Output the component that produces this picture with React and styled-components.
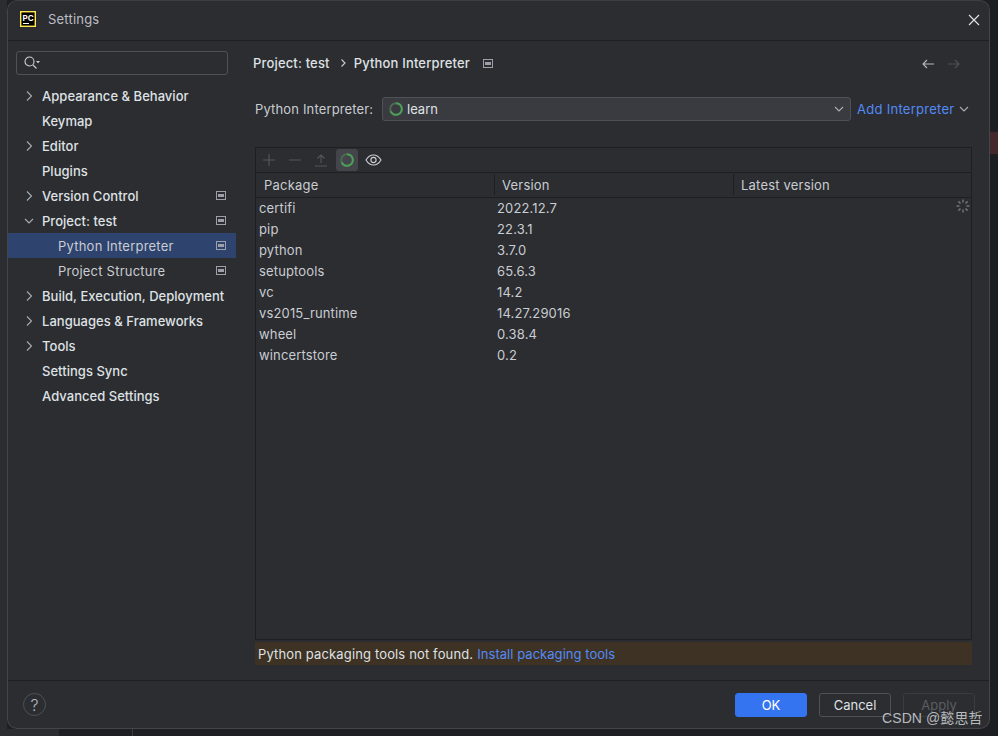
import React from 'react';
import styled, { createGlobalStyle } from 'styled-components';

const GlobalStyle = createGlobalStyle`
  html, body {
    margin: 0;
    padding: 0;
    background: #1e1f22;
    overflow: hidden;
  }
  * {
    box-sizing: border-box;
  }
`;

const Desktop = styled.div`
  position: relative;
  width: 998px;
  height: 736px;
  display: flex;
  flex-direction: column;
  font-family: Inter, 'Liberation Sans', sans-serif;
  font-size: 13px;
  color: #dfe1e5;
`;

const Middle = styled.div`
  display: flex;
  height: 729px;
`;

const LeftEdge = styled.div`
  width: 7px;
  background: #2b2d30;
`;

const RightEdge = styled.div`
  flex: 1;
  padding-top: 132px;
  background: #1e1f22;
`;

const RedMark = styled.div`
  height: 22px;
  background: #45282b;
`;

const BottomEdge = styled.div`
  height: 7px;
  display: flex;
  background: #1e1f22;
`;

const BottomLeft = styled.div`
  width: 59px;
  background: #2b2d30;
`;

const BottomGutter = styled.div`
  width: 74px;
  border-right: 1px solid #393b40;
`;

const Dialog = styled.div`
  width: 983px;
  display: flex;
  flex-direction: column;
  background: #2b2d30;
  border: 1px solid #43454a;
  border-top-color: #3c3e43;
  border-radius: 10px;
  overflow: hidden;
`;

const TitleBar = styled.div`
  height: 40px;
  flex: none;
  display: flex;
  align-items: center;
  padding: 0 10px 3px 12px;
  border-bottom: 1px solid #1e1f22;
`;

const TitleText = styled.span`
  margin-left: 12px;
  color: #bcbec4;
  letter-spacing: 0.2px;
  flex: 1;
`;

const CloseSlot = styled.span`
  display: flex;
  margin-top: 2px;
  margin-right: -1px;
`;

const Content = styled.div`
  flex: 1;
  min-height: 0;
  display: flex;
`;

const Sidebar = styled.div`
  width: 228px;
  flex: none;
  padding-top: 10px;
`;

const SearchBox = styled.div`
  height: 24px;
  margin: 0 8px 8px 8px;
  padding-left: 6px;
  display: flex;
  align-items: center;
  border: 1px solid #4e5157;
  border-radius: 3px;
`;

const TreeRow = styled.div`
  height: 25px;
  display: flex;
  align-items: center;
  padding-left: ${p => (p.$child ? 50 : 34)}px;
  padding-right: 10px;
  background: ${p => (p.$selected ? '#2e436e' : 'transparent')};
  color: ${p => (p.$child ? '#c9ccd2' : '#dfe1e5')};
  font-weight: ${p => (p.$child ? 400 : 500)};
  letter-spacing: ${p => (p.$child ? '0.22px' : '0.03px')};
  position: relative;
`;

const Arrow = styled.span`
  position: absolute;
  left: 15px;
  top: 7px;
  width: 12px;
  height: 12px;
  display: flex;
`;

const RowLabel = styled.span`
  flex: 1;
`;

const Main = styled.div`
  flex: 1;
  min-width: 0;
  display: flex;
  flex-direction: column;
  padding: 0 17px 0 19px;
`;

const Breadcrumbs = styled.div`
  height: 44px;
  flex: none;
  margin-left: -2px;
  display: flex;
  align-items: center;
  font-weight: 500;
  letter-spacing: 0.16px;
`;

const CrumbSep = styled.span`
  margin: 0 5px 0 7px;
  display: flex;
`;

const CrumbIcon = styled.span`
  margin-left: 13px;
  display: flex;
`;

const NavArrows = styled.div`
  margin-left: auto;
  margin-right: 12px;
  margin-top: 2px;
  display: flex;
  gap: 14px;
`;

const InterpreterRow = styled.div`
  margin-top: 11px;
  height: 26px;
  flex: none;
  display: flex;
  align-items: center;
`;

const InterpreterLabel = styled.span`
  width: 127px;
  flex: none;
  color: #c9ccd2;
  letter-spacing: 0.15px;
`;

const Combo = styled.div`
  width: 469px;
  height: 24px;
  flex: none;
  display: flex;
  align-items: center;
  padding: 0 5px 0 6px;
  gap: 4px;
  background: #393b40;
  border: 1px solid #4e5157;
  border-radius: 3px;
  color: #dfe1e5;
`;

const AddLink = styled.span`
  margin-left: 6px;
  color: #548af7;
  display: flex;
  align-items: center;
  gap: 3px;
  letter-spacing: 0.28px;
  white-space: nowrap;
`;

const PackagesPanel = styled.div`
  margin-top: 25px;
  height: 493px;
  flex: none;
  display: flex;
  flex-direction: column;
  border: 1px solid #1e1f22;
`;

const Toolbar = styled.div`
  height: 25px;
  flex: none;
  display: flex;
  align-items: center;
  padding-left: 2px;
  border-bottom: 1px solid #1e1f22;
`;

const ToolButton = styled.div`
  width: 22px;
  height: 22px;
  margin-right: 4px;
  display: flex;
  align-items: center;
  justify-content: center;
  border-radius: 3px;
  background: ${p => (p.$active ? '#43454a' : 'transparent')};
`;

const TableHead = styled.div`
  height: 25px;
  flex: none;
  display: grid;
  grid-template-columns: 238px 239px 1fr;
  border-bottom: 1px solid #1e1f22;
`;

const HeadCell = styled.div`
  display: flex;
  align-items: center;
  padding-left: ${p => (p.$first ? 8 : 7)}px;
  height: 21px;
  margin-top: 1px;
  color: #c9ccd2;
  letter-spacing: 0.2px;
  border-left: ${p => (p.$first ? 'none' : '1px solid #1e1f22')};
`;

const TableBody = styled.div`
  position: relative;
  flex: 1;
`;

const Row = styled.div`
  height: 21px;
  display: grid;
  grid-template-columns: 238px 1fr;
  align-items: start;
  line-height: 20px;
  padding-left: 3px;
  color: #c9ccd2;
  letter-spacing: 0.15px;
`;

const Spinner = styled.span`
  position: absolute;
  top: 1px;
  right: 1px;
  display: flex;
`;

const WarningBar = styled.div`
  margin-top: 2px;
  height: 23px;
  flex: none;
  display: flex;
  align-items: center;
  padding-left: 3px;
  gap: 4px;
  background: #3d3223;
  color: #dfe1e5;
  letter-spacing: 0.14px;
`;

const WarningLink = styled.span`
  color: #548af7;
  letter-spacing: 0.04px;
`;

const Footer = styled.div`
  height: 48px;
  flex: none;
  display: flex;
  align-items: center;
  padding: 0 14px 0 15px;
  border-top: 1px solid #1e1f22;
`;

const HelpButton = styled.div`
  width: 23px;
  height: 23px;
  display: flex;
  align-items: center;
  justify-content: center;
  border: 1px solid #4e5157;
  border-radius: 50%;
  color: #b4b8bf;
  font-size: 16px;
  font-weight: 300;
  margin-right: auto;
`;

const DialogButton = styled.div`
  width: 72px;
  height: 24px;
  margin-left: 12px;
  display: flex;
  align-items: center;
  justify-content: center;
  border-radius: 3px;
  background: ${p => (p.$primary ? '#3574f0' : 'transparent')};
  border: 1px solid ${p => (p.$primary ? '#3574f0' : p.$disabled ? '#393b40' : '#4e5157')};
  color: ${p => (p.$disabled ? '#5a5d63' : p.$primary ? '#ffffff' : '#dfe1e5')};
`;

const Watermark = styled.span`
  position: absolute;
  left: 882px;
  top: 710px;
  color: #b9bbbf;
  font-family: 'Liberation Sans', 'Noto Sans CJK SC', sans-serif;
  font-size: 14px;
  line-height: 16px;
  letter-spacing: 0.1px;
`;

const Logo = () => (
  <svg width="16" height="16" viewBox="0 0 16 16">
    <rect x="0.7" y="0.7" width="14.600" height="14.600" fill="#000" stroke="#ffe94d" strokeWidth="1.400" />
    <text x="2.600" y="9.500" fill="#fff" fontSize="8" fontWeight="700" fontFamily="Inter, sans-serif">PC</text>
    <rect x="3" y="12" width="6" height="1" fill="#fff" />
  </svg>
);

const Close = () => (
  <svg width="12" height="12" viewBox="0 0 12 12" fill="none" stroke="#e3e5e8" strokeWidth="1.1">
    <path d="M1 1l10 10M11 1L1 11" />
  </svg>
);

const SearchIcon = () => (
  <svg width="18" height="16" viewBox="0 0 18 16" fill="none" stroke="#ced0d6" strokeWidth="1.1">
    <circle cx="6.5" cy="6.5" r="4.5" />
    <path d="M10 10l3.5 3.5" />
    <path d="M13 6h4l-2 2.2z" fill="#ced0d6" stroke="none" />
  </svg>
);

const Chevron = ({ open, color = '#a8adb5' }) => (
  <svg width="12" height="12" viewBox="0 0 12 12" fill="none" stroke={color} strokeWidth="1.1">
    <path d={open ? 'M2 4l4 4 4-4' : 'M4 1.500l4.500 4.500-4.500 4.500'} />
  </svg>
);

const SmallCrumbChevron = () => (
  <svg width="12" height="12" viewBox="0 0 12 12" fill="none" stroke="#c9ccd2" strokeWidth="1.1">
    <path d="M4.500 2.500l3.500 3.500-3.500 3.500" />
  </svg>
);

const ProjectMark = ({ color = '#9da0a8' }) => (
  <svg width="10" height="9" viewBox="0 0 10 9" fill="none">
    <rect x="0.5" y="0.5" width="9" height="8" stroke={color} />
    <rect x="2" y="3" width="6" height="3" fill={color} />
  </svg>
);

// busy ring: bright on the right and bottom, fading out to the top left
const Ring = () => (
  <svg width="14" height="14" viewBox="0 0 14 14" fill="none" strokeWidth="2">
    <circle cx="7" cy="7" r="5.800" stroke="#4d6b52" />
    <path d="M7 1.200A5.800 5.800 0 1 1 1.700 9.300" stroke="#4c9f58" />
  </svg>
);

const Plus = () => (
  <svg width="14" height="14" viewBox="0 0 14 14" fill="none" stroke="#55575c" strokeWidth="1.1">
    <path d="M7 1v12M1 7h12" />
  </svg>
);

const Minus = () => (
  <svg width="14" height="14" viewBox="0 0 14 14" fill="none" stroke="#55575c" strokeWidth="1.1">
    <path d="M1 7h12" />
  </svg>
);

const Upgrade = () => (
  <svg width="14" height="14" viewBox="0 0 14 14" fill="none" stroke="#55575c" strokeWidth="1.1">
    <path d="M7 10V2M3.5 5.5L7 2l3.5 3.5M1 13h12" />
  </svg>
);

const Eye = () => (
  <svg width="17" height="12" viewBox="0 0 17 12" fill="none" stroke="#ced0d6" strokeWidth="1.1">
    <path d="M1 6c2-3.400 4.500-5 7.500-5s5.500 1.600 7.500 5c-2 3.400-4.500 5-7.500 5S3 9.400 1 6z" />
    <circle cx="8.500" cy="6" r="2.600" />
  </svg>
);

const NavArrow = ({ back, color }) => (
  <svg width="12" height="10" viewBox="0 0 12 10" fill="none" stroke={color} strokeWidth="1.1">
    <path d={back ? 'M12 5H1M5 1L1 5l4 4' : 'M0 5h11M7 1l4 4-4 4'} />
  </svg>
);

const LoadingSpinner = () => (
  <svg width="14" height="14" viewBox="0 0 14 14" fill="none" stroke="#6f7278" strokeWidth="1.500">
    <path d="M7 0.500v3M7 10.500v3M0.500 7h3M10.500 7h3M2.400 2.400l2.100 2.100M9.500 9.500l2.100 2.100M11.600 2.400L9.500 4.500M4.500 9.500l-2.100 2.100" />
  </svg>
);

const treeItems = [
  { label: 'Appearance & Behavior', arrow: 'closed' },
  { label: 'Keymap' },
  { label: 'Editor', arrow: 'closed' },
  { label: 'Plugins' },
  { label: 'Version Control', arrow: 'closed', mark: true },
  { label: 'Project: test', arrow: 'open', mark: true },
  { label: 'Python Interpreter', child: true, selected: true, mark: true },
  { label: 'Project Structure', child: true, mark: true },
  { label: 'Build, Execution, Deployment', arrow: 'closed' },
  { label: 'Languages & Frameworks', arrow: 'closed' },
  { label: 'Tools', arrow: 'closed' },
  { label: 'Settings Sync' },
  { label: 'Advanced Settings' },
];

const packages = [
  ['certifi', '2022.12.7'],
  ['pip', '22.3.1'],
  ['python', '3.7.0'],
  ['setuptools', '65.6.3'],
  ['vc', '14.2'],
  ['vs2015_runtime', '14.27.29016'],
  ['wheel', '0.38.4'],
  ['wincertstore', '0.2'],
];

const App = () => (
  <Desktop>
    <GlobalStyle />
    <Middle>
      <LeftEdge />
      <Dialog>
        <TitleBar>
          <Logo />
          <TitleText>Settings</TitleText>
          <CloseSlot>
            <Close />
          </CloseSlot>
        </TitleBar>
        <Content>
          <Sidebar>
            <SearchBox>
              <SearchIcon />
            </SearchBox>
            {treeItems.map(item => (
              <TreeRow key={item.label} $child={item.child} $selected={item.selected}>
                {item.arrow && (
                  <Arrow>
                    <Chevron open={item.arrow === 'open'} />
                  </Arrow>
                )}
                <RowLabel>{item.label}</RowLabel>
                {item.mark && <ProjectMark />}
              </TreeRow>
            ))}
          </Sidebar>
          <Main>
            <Breadcrumbs>
              Project: test
              <CrumbSep>
                <SmallCrumbChevron />
              </CrumbSep>
              Python Interpreter
              <CrumbIcon>
                <ProjectMark />
              </CrumbIcon>
              <NavArrows>
                <NavArrow back color="#b4b8bf" />
                <NavArrow color="#4e5157" />
              </NavArrows>
            </Breadcrumbs>
            <InterpreterRow>
              <InterpreterLabel>Python Interpreter:</InterpreterLabel>
              <Combo>
                <Ring />
                <RowLabel>learn</RowLabel>
                <Chevron open />
              </Combo>
              <AddLink>
                Add Interpreter
                <Chevron open />
              </AddLink>
            </InterpreterRow>
            <PackagesPanel>
              <Toolbar>
                <ToolButton><Plus /></ToolButton>
                <ToolButton><Minus /></ToolButton>
                <ToolButton><Upgrade /></ToolButton>
                <ToolButton $active><Ring /></ToolButton>
                <ToolButton><Eye /></ToolButton>
              </Toolbar>
              <TableHead>
                <HeadCell $first>Package</HeadCell>
                <HeadCell>Version</HeadCell>
                <HeadCell>Latest version</HeadCell>
              </TableHead>
              <TableBody>
                {packages.map(([name, version]) => (
                  <Row key={name}>
                    <span>{name}</span>
                    <span>{version}</span>
                  </Row>
                ))}
                <Spinner>
                  <LoadingSpinner />
                </Spinner>
              </TableBody>
            </PackagesPanel>
            <WarningBar>
              Python packaging tools not found.
              <WarningLink>Install packaging tools</WarningLink>
            </WarningBar>
          </Main>
        </Content>
        <Footer>
          <HelpButton>?</HelpButton>
          <DialogButton $primary>OK</DialogButton>
          <DialogButton>Cancel</DialogButton>
          <DialogButton $disabled>Apply</DialogButton>
        </Footer>
      </Dialog>
      <RightEdge>
        <RedMark />
      </RightEdge>
    </Middle>
    <BottomEdge>
      <BottomLeft />
      <BottomGutter />
    </BottomEdge>
    <Watermark>CSDN @懿思哲</Watermark>
  </Desktop>
);

export default App;
